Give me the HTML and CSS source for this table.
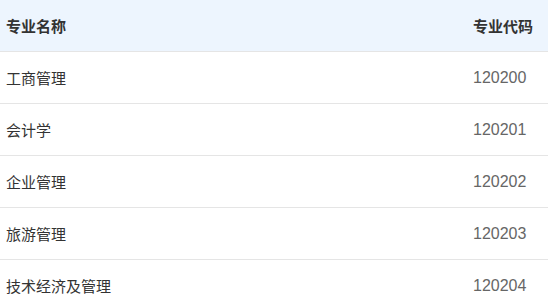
FILE: index.html
```html
<!DOCTYPE html>
<html lang="zh">
<head>
<meta charset="utf-8">
<link rel="stylesheet" href="styles.css">
</head>
<body>
<table class="majors">
  <thead>
    <tr><th class="name">专业名称</th><th class="code">专业代码</th></tr>
  </thead>
  <tbody>
    <tr><td class="name">工商管理</td><td class="code">120200</td></tr>
    <tr><td class="name">会计学</td><td class="code">120201</td></tr>
    <tr><td class="name">企业管理</td><td class="code">120202</td></tr>
    <tr><td class="name">旅游管理</td><td class="code">120203</td></tr>
    <tr><td class="name">技术经济及管理</td><td class="code">120204</td></tr>
  </tbody>
</table>
</body>
</html>
```
FILE: styles.css
```css
html, body {
  margin: 0;
  padding: 0;
  background: #fff;
}
body {
  font-family: "Liberation Sans", "Noto Sans CJK SC", sans-serif;
  color: #333;
}
.majors {
  width: 548px;
  border-collapse: collapse;
}
.majors th,
.majors td {
  height: 51px;
  padding: 0 15px 0 6px;
  border-bottom: 1px solid #e5e5e5;
  text-align: left;
  vertical-align: middle;
  font-size: 15px;
}
.majors thead th {
  background: #edf5fe;
  font-weight: bold;
  color: #333;
}
.majors .code {
  width: 60px;
  padding-left: 0;
}
.majors td.code {
  color: #666;
  font-size: 16px;
}
```
